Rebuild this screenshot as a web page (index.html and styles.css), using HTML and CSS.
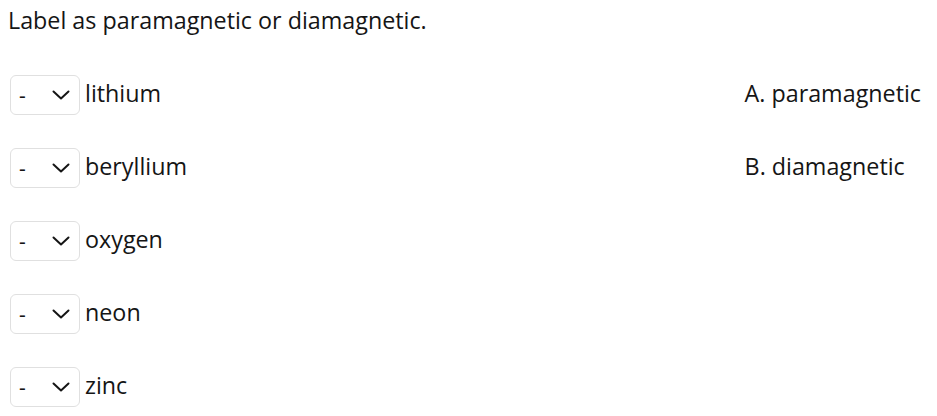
FILE: index.html
```html
<!DOCTYPE html>
<html lang="en">
<head>
<meta charset="utf-8">
<title>Matching</title>
<link rel="stylesheet" href="styles.css">
</head>
<body>
<main class="question">
  <p class="prompt">Label as paramagnetic or diamagnetic.</p>
  <div class="matching">
    <ul class="items">
      <li class="item">
        <span class="picker"><span class="picker-value">-</span><svg class="chevron" viewBox="0 0 18 10"><path d="M1.5 1.5 L9 8.5 L16.5 1.5"/></svg></span>
        <span class="item-label">lithium</span>
      </li>
      <li class="item">
        <span class="picker"><span class="picker-value">-</span><svg class="chevron" viewBox="0 0 18 10"><path d="M1.5 1.5 L9 8.5 L16.5 1.5"/></svg></span>
        <span class="item-label">beryllium</span>
      </li>
      <li class="item">
        <span class="picker"><span class="picker-value">-</span><svg class="chevron" viewBox="0 0 18 10"><path d="M1.5 1.5 L9 8.5 L16.5 1.5"/></svg></span>
        <span class="item-label">oxygen</span>
      </li>
      <li class="item">
        <span class="picker"><span class="picker-value">-</span><svg class="chevron" viewBox="0 0 18 10"><path d="M1.5 1.5 L9 8.5 L16.5 1.5"/></svg></span>
        <span class="item-label">neon</span>
      </li>
      <li class="item">
        <span class="picker"><span class="picker-value">-</span><svg class="chevron" viewBox="0 0 18 10"><path d="M1.5 1.5 L9 8.5 L16.5 1.5"/></svg></span>
        <span class="item-label">zinc</span>
      </li>
    </ul>
    <ol class="choices">
      <li class="choice"><span class="choice-key">A.</span>paramagnetic</li>
      <li class="choice"><span class="choice-key">B.</span>diamagnetic</li>
    </ol>
  </div>
</main>
</body>
</html>
```

FILE: styles.css
```css
html, body {
  margin: 0;
  padding: 0;
  background: #ffffff;
}

body {
  font-family: "Open Sans", "Noto Sans", sans-serif;
  font-size: 23.3px;
  color: #151515;
}

.question {
  padding: 0 16px 0 8px;
}

.prompt {
  margin: 0;
  padding-top: 4px;
  line-height: 32px;
}

.matching {
  display: flex;
  justify-content: space-between;
  margin-top: 39px;
}

.items,
.choices {
  list-style: none;
  margin: 0;
  padding: 0;
}

.items {
  display: flex;
  flex-direction: column;
  gap: 33px;
}

.item {
  display: flex;
  align-items: center;
  gap: 5px;
}

.picker {
  box-sizing: border-box;
  width: 70px;
  height: 40px;
  margin-left: 2px;
  border: 1px solid #e0e0e0;
  border-radius: 6px;
  display: flex;
  align-items: center;
  justify-content: space-between;
  padding: 0 9px 0 8px;
}

.picker-value {
  font-size: 21px;
  line-height: 1;
}

.chevron {
  width: 18px;
  height: 10px;
  fill: none;
  stroke: #151515;
  stroke-width: 2;
  stroke-linecap: round;
  stroke-linejoin: round;
}

.item-label {
  line-height: 36px;
  margin-bottom: 4px;
}

.choices {
  display: flex;
  flex-direction: column;
  gap: 33px;
}

.choice {
  line-height: 36px;
  padding-bottom: 4px;
}

.choice-key {
  margin-right: 6px;
}
```
